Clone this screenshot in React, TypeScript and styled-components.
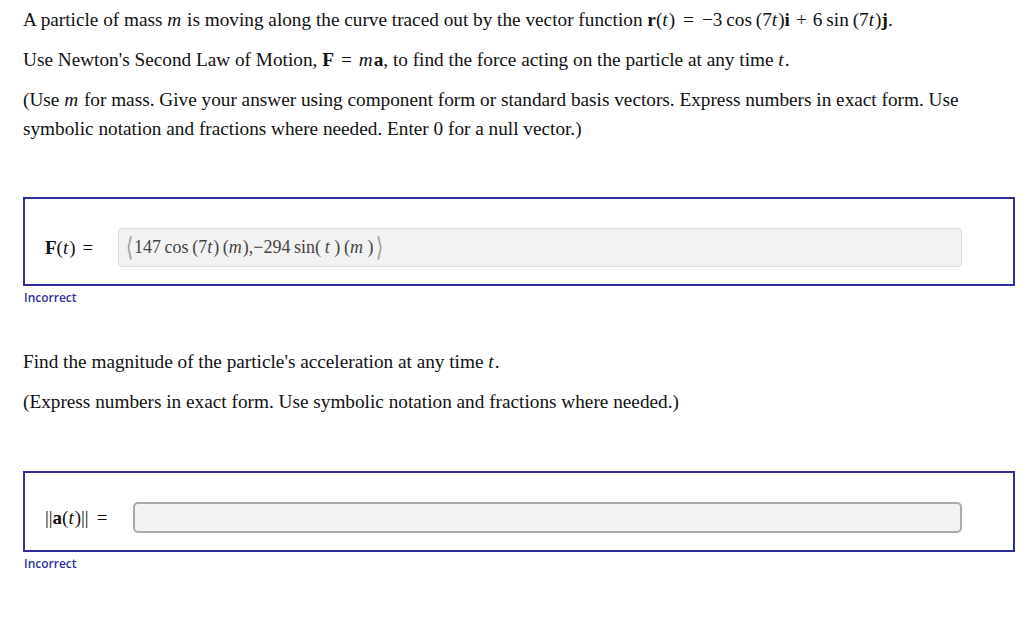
import React from "react";
import styled, { createGlobalStyle } from "styled-components";

const Global = createGlobalStyle`
  html, body { margin: 0; padding: 0; background: #fff; }
  body { font-family: "Liberation Serif", "Times New Roman", serif; color: #111; }
`;

const Page = styled.div`
  padding: 5px 9px 0 23px;
  width: 992px;
`;

const Para = styled.p<{ $gap?: number }>`
  margin: 0 0 ${(p) => p.$gap ?? 11}px 0;
  font-size: 19.25px;
  line-height: 29px;
  padding-right: 45px;
`;

const I = styled.i`
  font-style: italic;
  padding-right: 1px;
`;
const B = styled.b`
  font-weight: bold;
`;
const Op = styled.span<{ $s?: number }>`
  margin: 0 ${(p) => p.$s ?? 5}px;
`;

const AnswerBox = styled.div<{ $top: number }>`
  margin-top: ${(p) => p.$top}px;
  border: 2px solid #2e2f9c;
  padding: 29px 51px 17px 20px;
  display: flex;
  align-items: center;
`;

const Label = styled.div<{ $w: number }>`
  width: ${(p) => p.$w}px;
  flex: none;
  font-size: 19px;
  white-space: nowrap;
`;

const Field = styled.div<{ $h: number; $strong?: boolean }>`
  flex: 1;
  height: ${(p) => p.$h}px;
  box-sizing: border-box;
  background: #f2f2f2;
  border: ${(p) => (p.$strong ? "2px solid #ababab" : "1px solid #dcdcdc")};
  border-radius: ${(p) => (p.$strong ? 5 : 4)}px;
  display: flex;
  align-items: center;
  padding-left: 5px;
  font-size: 18px;
  color: #444;
`;

const Bracket = styled.span`
  font-size: 26px;
  color: #9a9a9a;
  line-height: 1;
  transform: scaleX(0.7);
  display: inline-block;
`;

const Status = styled.div<{ $after: number }>`
  font-family: "Open Sans", "Liberation Sans", sans-serif;
  font-weight: 600;
  font-size: 12px;
  line-height: 16px;
  color: #2e2f9c;
  margin: 4px 0 ${(p) => p.$after}px 1px;
`;

export default function App() {
  return (
    <>
      <Global />
      <Page>
        <Para>
          A particle of mass <I>m</I> is moving along the curve traced out by the vector function <B>r</B>(<I>t</I>)
          <Op $s={8}>=</Op>−3&thinsp;cos&thinsp;(7<I>t</I>)<B>i</B>
          <Op $s={6}>+</Op>6&thinsp;sin&thinsp;(7<I>t</I>)<B>j</B>.
        </Para>
        <Para>
          Use Newton's Second Law of Motion, <B>F</B>
          <Op $s={7}>=</Op>
          <I>m</I>
          <B>a</B>, to find the force acting on the particle at any time <I>t</I>.
        </Para>
        <Para $gap={0}>
          (Use <I>m</I> for mass. Give your answer using component form or standard basis vectors. Express numbers in
          exact form. Use symbolic notation and fractions where needed. Enter 0 for a null vector.)
        </Para>
        <AnswerBox $top={54}>
          <Label $w={73}>
            <B>F</B>(<I>t</I>)<Op $s={7}>=</Op>
          </Label>
          <Field $h={39}>
            <Bracket>⟨</Bracket>
            <span>
              147&thinsp;cos&thinsp;(7<I>t</I>)&thinsp;(<I>m</I>),−294&thinsp;sin(&thinsp;<I>t</I>&thinsp;)&thinsp;(
              <I>m</I>&thinsp;)
            </span>
            <Bracket>⟩</Bracket>
          </Field>
        </AnswerBox>
        <Status $after={41}>Incorrect</Status>
        <Para>
          Find the magnitude of the particle's acceleration at any time <I>t</I>.
        </Para>
        <Para $gap={0}>(Express numbers in exact form. Use symbolic notation and fractions where needed.)</Para>
        <AnswerBox $top={55}>
          <Label $w={88}>
            ||<B>a</B>(<I>t</I>)||<Op $s={8}>=</Op>
          </Label>
          <Field $h={31} $strong />
        </AnswerBox>
        <Status $after={0}>Incorrect</Status>
      </Page>
    </>
  );
}
